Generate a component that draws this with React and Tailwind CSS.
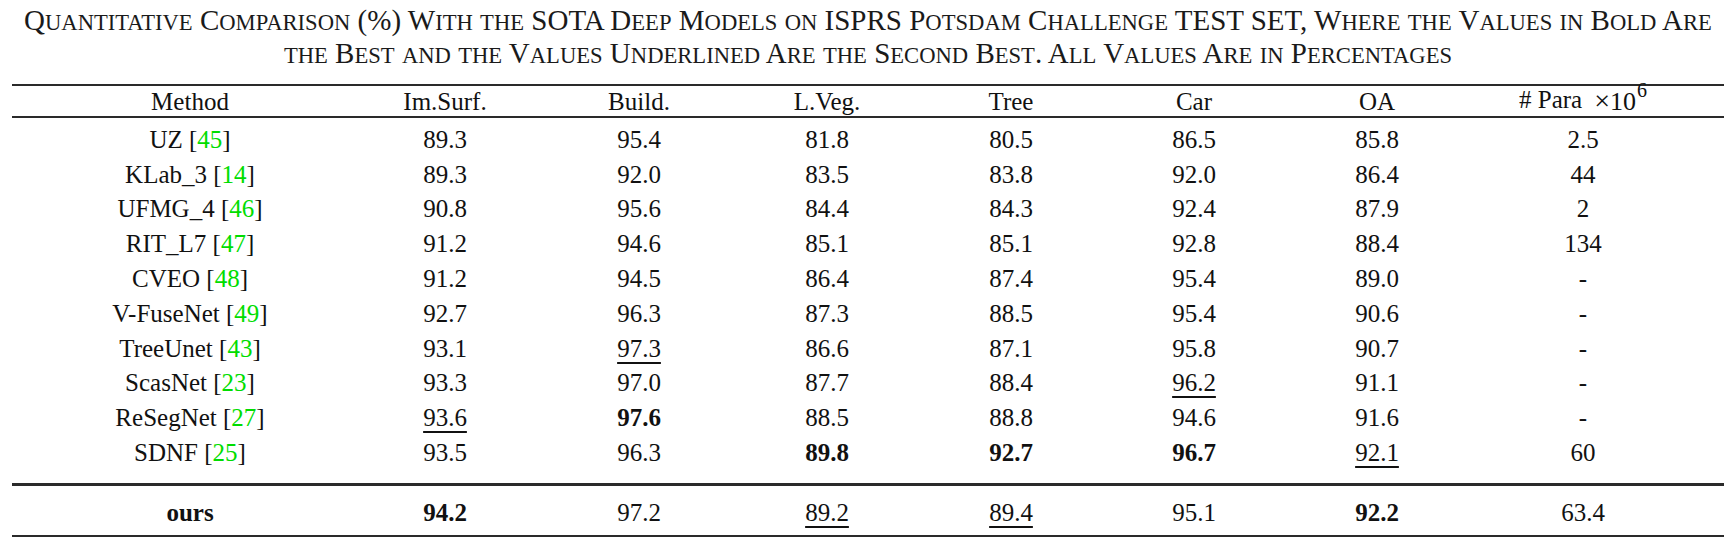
import React from "react";

// column placement: left margin + fixed width, so every column is centred where the reference has it
const COLS = [
    "ml-[68px] w-[220px]",
    "ml-[70px] w-[150px]",
    "ml-[44px] w-[150px]",
    "ml-[38px] w-[150px]",
    "ml-[34px] w-[150px]",
    "ml-[33px] w-[150px]",
    "ml-[33px] w-[150px]",
    "ml-[41px] w-[180px]",
];

const rows = [
    ["UZ", "45", "89.3", "95.4", "81.8", "80.5", "86.5", "85.8", "2.5"],
    ["KLab_3", "14", "89.3", "92.0", "83.5", "83.8", "92.0", "86.4", "44"],
    ["UFMG_4", "46", "90.8", "95.6", "84.4", "84.3", "92.4", "87.9", "2"],
    ["RIT_L7", "47", "91.2", "94.6", "85.1", "85.1", "92.8", "88.4", "134"],
    ["CVEO", "48", "91.2", "94.5", "86.4", "87.4", "95.4", "89.0", "-"],
    ["V-FuseNet", "49", "92.7", "96.3", "87.3", "88.5", "95.4", "90.6", "-"],
    ["TreeUnet", "43", "93.1", "u:97.3", "86.6", "87.1", "95.8", "90.7", "-"],
    ["ScasNet", "23", "93.3", "97.0", "87.7", "88.4", "u:96.2", "91.1", "-"],
    ["ReSegNet", "27", "u:93.6", "b:97.6", "88.5", "88.8", "94.6", "91.6", "-"],
    ["SDNF", "25", "93.5", "96.3", "b:89.8", "b:92.7", "b:96.7", "u:92.1", "60"],
];

const ours = ["94.2", "97.2", "89.2", "89.4", "95.1", "92.2", "63.4"];
const oursMarks = ["b:", "", "u:", "u:", "", "b:", ""];

// small caps with a larger lowercase size than the browser's synthetic one
function SmallCaps({ text }) {
    const parts = text.split(/([a-z]+)/);
    return (
        <>
            {parts.map((p, i) =>
                /^[a-z]+$/.test(p) ? (
                    <span key={i} className="text-[0.78em]">
                        {p.toUpperCase()}
                    </span>
                ) : (
                    <span key={i}>{p}</span>
                )
            )}
        </>
    );
}

function Value({ v }) {
    if (v.startsWith("b:")) {
        return <span className="font-bold">{v.slice(2)}</span>;
    }
    if (v.startsWith("u:")) {
        return (
            <span className="underline decoration-[1.5px] underline-offset-[5px]">
                {v.slice(2)}
            </span>
        );
    }
    return <span>{v}</span>;
}

function Cell({ col, children }) {
    return (
        <div className={`${COLS[col]} shrink-0 flex justify-center whitespace-nowrap`}>
            {children}
        </div>
    );
}

export default function App() {
    const headers = ["Method", "Im.Surf.", "Build.", "L.Veg.", "Tree", "Car", "OA"];

    return (
        <div
            className="w-[1736px] h-[544px] bg-white text-[#111] overflow-hidden"
            style={{ fontFamily: '"Liberation Serif", "Times New Roman", serif' }}
        >
            {/* caption */}
            <div className="pt-[5px] text-center text-[29px] leading-[30px] text-[#1a1a1a]">
                <div className="whitespace-nowrap">
                    <SmallCaps text="Quantitative Comparison (%) With the SOTA Deep Models on ISPRS Potsdam Challenge TEST SET, Where the Values in Bold Are" />
                </div>
                <div className="whitespace-nowrap">
                    <SmallCaps text="the Best and the Values Underlined Are the Second Best. All Values Are in Percentages" />
                </div>
            </div>

            <div className="mx-[12px] mt-[13px] text-[25px] leading-none">
                <div className="h-[2px] bg-[#2a2a2a]" />

                {/* header */}
                <div className="flex h-[30px] items-center">
                    {headers.map((h, i) => (
                        <Cell key={h} col={i}>
                            {h}
                        </Cell>
                    ))}
                    <Cell col={7}>
                        <span className="flex items-start">
                            <span># Para</span>
                            <span className="ml-[12px] text-[26px]">
                                <span className="text-[28px] leading-none">×</span>10
                            </span>
                            <span className="ml-[1px] text-[20px] -mt-[7px]">6</span>
                        </span>
                    </Cell>
                </div>

                <div className="h-[2px] bg-[#2a2a2a]" />

                <div className="pt-[4px] pb-[13px]">
                    {rows.map((r) => (
                        <div key={r[0]} className="flex h-[34.8px] items-center">
                            <Cell col={0}>
                                <span>
                                    {r[0]} [<span className="text-[#00dd00]">{r[1]}</span>]
                                </span>
                            </Cell>
                            {r.slice(2).map((v, i) => (
                                <Cell key={i} col={i + 1}>
                                    <Value v={v} />
                                </Cell>
                            ))}
                        </div>
                    ))}
                </div>

                <div className="h-[3px] bg-[#2a2a2a]" />

                {/* ours */}
                <div className="flex h-[49px] pt-[5px] items-center">
                    <Cell col={0}>
                        <span className="font-bold">ours</span>
                    </Cell>
                    {ours.map((v, i) => (
                        <Cell key={i} col={i + 1}>
                            <Value v={oursMarks[i] + v} />
                        </Cell>
                    ))}
                </div>

                <div className="h-[2px] bg-[#2a2a2a]" />
            </div>
        </div>
    );
}
